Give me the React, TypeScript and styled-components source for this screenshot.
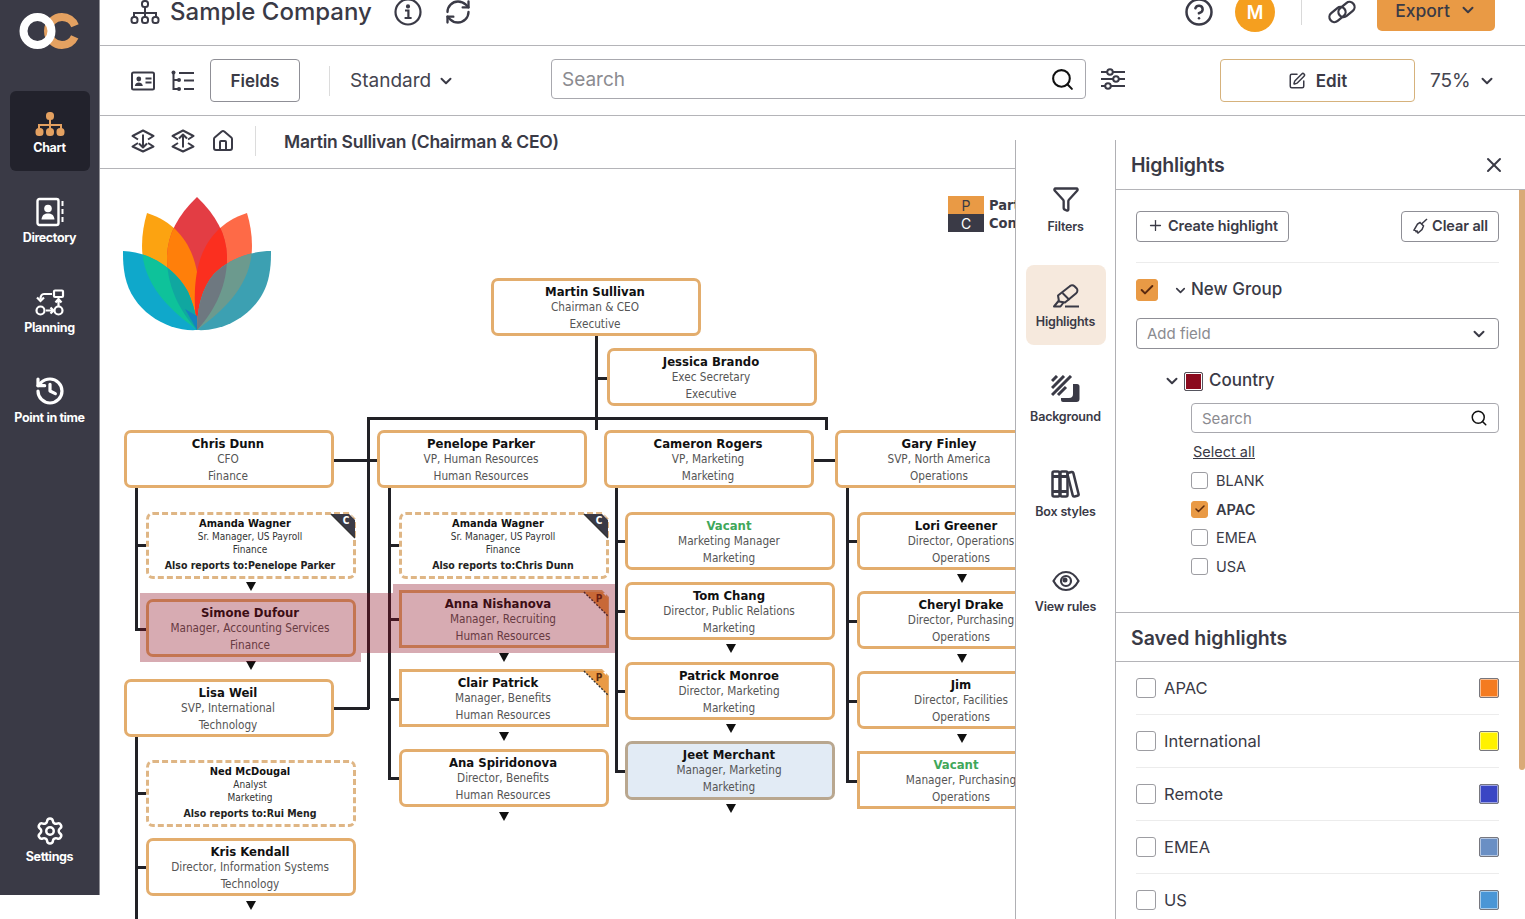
import React from "react";
import styled, { createGlobalStyle } from "styled-components";
import {
  Check,
  ChevronDown,
  CircleHelp,
  Funnel,
  History,
  House,
  Plus,
  RefreshCw,
  Search,
  Settings,
  SquarePen,
  X,
} from "lucide-react";

const INK = "#3a3a46";
const ORANGE = "#e99a45";
const LINE = "#b4b4b8";
const BOX = "#e3ad6d";
const UI_FONT = `Inter, "Noto Sans", sans-serif`;
const CHART_FONT = `"DejaVu Sans Condensed", "DejaVu Sans", Verdana, sans-serif`;

// page position of the chart canvas, the data below is in page pixels
const OX = 100;
const OY = 169;

const GlobalStyle = createGlobalStyle`
  html, body {
    margin: 0;
    padding: 0;
    background: #fff;
  }
  * {
    box-sizing: border-box;
  }
  body {
    font-family: ${UI_FONT};
    color: ${INK};
  }
`;

const Page = styled.div`
  position: relative;
  display: flex;
  width: 1525px;
  height: 919px;
  overflow: hidden;
  background: #fff;
`;

const Sidebar = styled.nav`
  display: flex;
  flex-direction: column;
  align-items: center;
  flex: 0 0 100px;
  height: 895px;
  padding: 11px 0 5px;
  background: #3a3a46;
  border-right: 1px solid #8f8f96;
`;

const SideLogo = styled.svg`
  width: 62px;
  height: 42px;
  margin-bottom: 38px;
`;

const NavItem = styled.div<{ $active?: boolean; $bottom?: boolean }>`
  display: flex;
  flex-direction: column;
  align-items: center;
  justify-content: flex-end;
  gap: 3px;
  width: 80px;
  height: 80px;
  margin-bottom: 10px;
  margin-top: ${(p) => (p.$bottom ? "auto" : "0")};
  padding-bottom: 16px;
  border-radius: 6px;
  background: ${(p) => (p.$active ? "#22222c" : "transparent")};
  color: #fff;
`;

const NavLabel = styled.span`
  font-size: 12.5px;
  line-height: 15px;
  font-weight: 700;
  letter-spacing: -0.38px;
  white-space: nowrap;
`;

const Main = styled.div`
  display: flex;
  flex-direction: column;
  flex: 1;
  min-width: 0;
`;

const Header = styled.header`
  flex: 0 0 46px;
  overflow: hidden;
  border-bottom: 1px solid ${LINE};
`;

const HeaderRow = styled.div`
  display: flex;
  align-items: center;
  height: 46px;
  margin-top: -11px;
  padding: 0 30px;
`;

const CompanyName = styled.h1`
  margin: 0 22px 0 10px;
  font-size: 24px;
  line-height: 24px;
  font-weight: 500;
  white-space: nowrap;
`;

const RefreshIcon = styled(RefreshCw)`
  margin-left: 22px;
`;

const HeaderRight = styled.div`
  display: flex;
  align-items: center;
  margin-left: auto;
`;

const Avatar = styled.div`
  display: flex;
  align-items: center;
  justify-content: center;
  width: 40px;
  height: 40px;
  margin-left: 21px;
  border-radius: 50%;
  background: #f59f1f;
  color: #fff;
  font-size: 18px;
  font-weight: 600;
`;

const HeaderDivider = styled.span`
  width: 1px;
  height: 26px;
  margin: 0 25px 0 26px;
  background: #d9d9d9;
`;

const ExportButton = styled.button`
  display: flex;
  align-items: center;
  justify-content: center;
  gap: 9px;
  width: 118px;
  height: 38px;
  margin-left: 20px;
  padding: 0 0 4px;
  border: 0;
  border-radius: 5px;
  background: ${ORANGE};
  color: ${INK};
  font-family: ${UI_FONT};
  font-size: 17.5px;
  font-weight: 500;
`;

const Toolbar = styled.div`
  display: flex;
  align-items: center;
  flex: 0 0 70px;
  padding-left: 31px;
  border-bottom: 1px solid ${LINE};
`;

const OutlineButton = styled.button`
  display: flex;
  align-items: center;
  justify-content: center;
  height: 43px;
  background: #fff;
  border: 1px solid #8f8f96;
  border-radius: 4px;
  color: ${INK};
  font-family: ${UI_FONT};
  font-size: 17px;
  font-weight: 600;
`;

const FieldsButton = styled(OutlineButton)`
  width: 90px;
  margin-left: 15px;
`;

const EditButton = styled(OutlineButton)`
  gap: 10px;
  width: 195px;
  margin-left: 95px;
  border-color: #d6b27c;
`;

const VSep = styled.span<{ $h: number; $ml: number; $mr: number }>`
  flex: none;
  width: 1px;
  height: ${(p) => p.$h}px;
  margin: 0 ${(p) => p.$mr}px 0 ${(p) => p.$ml}px;
  background: #dcdcdc;
`;

const DropLabel = styled.span`
  font-size: 19px;
  font-weight: 400;
  color: #45454f;
  white-space: nowrap;
`;

const StandardDrop = styled.div`
  display: flex;
  align-items: center;
  gap: 6px;
  width: 201px;
`;

const ZoomDrop = styled.div`
  display: flex;
  align-items: center;
  gap: 7px;
  margin-left: 15px;
`;

const SearchBox = styled.div`
  display: flex;
  align-items: center;
  justify-content: space-between;
  width: 535px;
  height: 40px;
  margin: 0 15px 4px 0;
  padding: 1px 10px 0;
  border: 1px solid #a8a8ae;
  border-radius: 4px;
  font-size: 19px;
  color: #8b8b90;
`;

const SlidersWrap = styled.span`
  display: flex;
  margin-bottom: 4px;
`;

const Crumbs = styled.div`
  display: flex;
  align-items: center;
  gap: 16px;
  flex: 0 0 53px;
  padding: 0 0 2px 31px;
  border-bottom: 1px solid ${LINE};
`;

const CrumbName = styled.span`
  font-size: 17.5px;
  font-weight: 600;
  letter-spacing: -0.25px;
  white-space: nowrap;
`;

const Canvas = styled.div`
  position: relative;
  flex: 1;
  overflow: hidden;
  background: #fff;
`;

const Lotus = styled.svg`
  position: absolute;
  left: ${122 - OX}px;
  top: ${196 - OY}px;
  width: 150px;
  height: 136px;
`;

const LegendRow = styled.div<{ $top: number }>`
  position: absolute;
  left: ${948 - OX}px;
  top: ${(p) => p.$top - OY}px;
  display: flex;
  align-items: center;
  gap: 5px;
  height: 18px;
  font-family: ${CHART_FONT};
  font-stretch: condensed;
  font-size: 14.5px;
  font-weight: 700;
  white-space: nowrap;
`;

const LegendTile = styled.span<{ $dark?: boolean }>`
  display: flex;
  align-items: center;
  justify-content: center;
  width: 36px;
  height: 18px;
  background: ${(p) => (p.$dark ? INK : ORANGE)};
  color: ${(p) => (p.$dark ? "#fff" : INK)};
  font-family: ${UI_FONT};
  font-size: 14px;
  font-weight: 400;
`;

const Wire = styled.div<{ $x: number; $y: number; $w: number; $h: number }>`
  position: absolute;
  left: ${(p) => p.$x - OX}px;
  top: ${(p) => p.$y - OY}px;
  width: ${(p) => p.$w}px;
  height: ${(p) => p.$h}px;
  background: #212126;
`;

const Arrow = styled.div<{ $x: number; $y: number }>`
  position: absolute;
  left: ${(p) => p.$x - 5 - OX}px;
  top: ${(p) => p.$y - OY}px;
  width: 0;
  height: 0;
  border-left: 5.5px solid transparent;
  border-right: 5.5px solid transparent;
  border-top: 9px solid #111;
`;

const HighlightBand = styled.div<{ $x: number; $y: number; $w: number; $h: number }>`
  position: absolute;
  left: ${(p) => p.$x - OX}px;
  top: ${(p) => p.$y - OY}px;
  width: ${(p) => p.$w}px;
  height: ${(p) => p.$h}px;
  background: rgba(139, 10, 30, 0.34);
`;

const NodeBox = styled.div<{
  $x: number;
  $y: number;
  $h: number;
  $dashed?: boolean;
  $square?: boolean;
  $selected?: boolean;
}>`
  position: absolute;
  left: ${(p) => p.$x - OX}px;
  top: ${(p) => p.$y - OY}px;
  width: 210px;
  height: ${(p) => p.$h}px;
  padding: ${(p) => (p.$dashed ? "2px" : "3px")} 2px 0 0;
  border: 3px ${(p) => (p.$dashed ? "dashed" : "solid")}
    ${(p) => (p.$selected ? "#b9a78f" : p.$dashed ? "#dfb685" : BOX)};
  border-radius: ${(p) => (p.$square ? "0" : "7px")};
  background: ${(p) => (p.$selected ? "#e2ebf5" : "#fff")};
  font-family: ${CHART_FONT};
  font-stretch: condensed;
  text-align: center;
  white-space: nowrap;
`;

const NodeName = styled.div<{ $vacant?: boolean; $shift?: number; $small?: boolean }>`
  height: ${(p) => (p.$small ? "13px" : "16px")};
  font-size: ${(p) => (p.$small ? "11px" : "13px")};
  line-height: ${(p) => (p.$small ? "13px" : "16px")};
  font-weight: 700;
  color: ${(p) => (p.$vacant ? "#3fa75a" : "#111")};
  transform: translateX(${(p) => p.$shift ?? 0}px);
`;

const NodeRole = styled.div<{ $small?: boolean }>`
  height: ${(p) => (p.$small ? "13px" : "14px")};
  font-size: ${(p) => (p.$small ? "10px" : "11.7px")};
  line-height: ${(p) => (p.$small ? "13px" : "14px")};
  color: ${(p) => (p.$small ? "#333" : "#555")};
`;

const NodeDept = styled(NodeRole)`
  margin-top: ${(p) => (p.$small ? "0" : "2.5px")};
`;

const NodeAlso = styled.div`
  height: 14px;
  margin-top: 2px;
  font-size: 10.5px;
  line-height: 14px;
  font-weight: 700;
  color: #222;
`;

const NodeTag = styled.svg`
  position: absolute;
  right: -3px;
  top: -3px;
  width: 27px;
  height: 27px;
`;

const ToolPanel = styled.aside`
  position: absolute;
  left: 1015px;
  top: 140px;
  bottom: 0;
  width: 510px;
  display: flex;
  background: #fff;
`;

const Rail = styled.div`
  display: flex;
  flex-direction: column;
  align-items: center;
  gap: 15px;
  flex: 0 0 101px;
  padding-top: 30px;
  border-left: 1px solid #b0b0b4;
  border-right: 1px solid #b0b0b4;
`;

const RailItem = styled.div<{ $active?: boolean }>`
  display: flex;
  flex-direction: column;
  align-items: center;
  justify-content: flex-end;
  gap: 6px;
  width: 80px;
  height: 80px;
  padding-bottom: 16px;
  border-radius: 8px;
  background: ${(p) => (p.$active ? "#f6e9dd" : "transparent")};
`;

const RailLabel = styled.span`
  font-size: 12.5px;
  line-height: 15px;
  font-weight: 600;
  letter-spacing: -0.2px;
  white-space: nowrap;
`;

const Drawer = styled.div`
  position: relative;
  flex: 1;
  min-width: 0;
`;

const DrawerHead = styled.div`
  display: flex;
  align-items: center;
  justify-content: space-between;
  height: 50px;
  padding: 0 19px 0 15px;
  border-bottom: 1px solid ${LINE};
`;

const DrawerTitle = styled.h2`
  margin: 0;
  font-size: 19.5px;
  font-weight: 600;
  letter-spacing: -0.2px;
`;

const Thumb = styled.div`
  position: absolute;
  right: 0;
  top: 50px;
  width: 6px;
  height: 580px;
  border-radius: 0 0 3px 3px;
  background: #d9aa78;
`;

const DrawerBody = styled.div`
  padding: 0 26px 0 20px;
`;

const ActionRow = styled.div`
  display: flex;
  justify-content: space-between;
  padding: 21px 0 20px;
  border-bottom: 1px solid #ececec;
`;

const SmallButton = styled.button`
  display: flex;
  align-items: center;
  gap: 4px;
  height: 31px;
  padding: 0 10px 2px;
  background: #fff;
  border: 1px solid #8f8f96;
  border-radius: 4px;
  color: ${INK};
  font-family: ${UI_FONT};
  font-size: 14.5px;
  font-weight: 600;
  letter-spacing: -0.1px;
`;

const Box = styled.span<{ $size: number; $checked?: boolean }>`
  display: flex;
  align-items: center;
  justify-content: center;
  flex: none;
  width: ${(p) => p.$size}px;
  height: ${(p) => p.$size}px;
  border: 1px solid ${(p) => (p.$checked ? ORANGE : "#9d9da2")};
  border-radius: 3px;
  background: ${(p) => (p.$checked ? ORANGE : "#fff")};
`;

const GroupRow = styled.div`
  display: flex;
  align-items: center;
  height: 22px;
  margin-top: 16px;
`;

const GroupName = styled.span`
  margin: 0 0 2px 3px;
  font-size: 17px;
  font-weight: 500;
`;

const GroupChevron = styled(ChevronDown)`
  margin-left: 15px;
`;

const FieldSelect = styled.div`
  display: flex;
  align-items: center;
  justify-content: space-between;
  height: 31px;
  margin-top: 17px;
  padding: 0 10px;
  border: 1px solid #8f8f96;
  border-radius: 4px;
  font-size: 15px;
  color: #8b8b90;
`;

const CountryRow = styled.div`
  display: flex;
  align-items: center;
  height: 20px;
  margin-top: 22px;
  padding-left: 27px;
`;

const CountrySwatch = styled.span`
  width: 19px;
  height: 19px;
  margin: 0 3px 0 3px;
  border: 1px solid #55555e;
  border-radius: 2px;
  background: #8b0a1e;
  box-shadow: inset 0 0 0 1px #fff;
`;

const ValueSearch = styled.div`
  display: flex;
  align-items: center;
  justify-content: space-between;
  height: 30px;
  margin: 12px 0 0 55px;
  padding: 0 10px;
  border: 1px solid #a8a8ae;
  border-radius: 4px;
  font-size: 15px;
  color: #8b8b90;
`;

const SelectAll = styled.div`
  margin: 10px 0 5px 57px;
  font-size: 14.5px;
  line-height: 18px;
  text-decoration: underline;
`;

const ValueRow = styled.label<{ $checked?: boolean }>`
  display: flex;
  align-items: center;
  gap: 8px;
  height: 28.7px;
  margin-left: 55px;
  font-size: 14.5px;
  font-weight: ${(p) => (p.$checked ? 600 : 400)};
`;

const SavedHead = styled.div`
  display: flex;
  align-items: center;
  height: 50px;
  margin: 31px 6px 0 0;
  padding: 2px 0 0 15px;
  border-top: 1px solid ${LINE};
  border-bottom: 1px solid ${LINE};
`;

const SavedTitle = styled.h3`
  margin: 0;
  font-size: 19.5px;
  font-weight: 600;
`;

const SavedRow = styled.div`
  display: flex;
  align-items: center;
  gap: 8px;
  height: 53px;
  border-bottom: 1px solid #ececec;
  font-size: 16.5px;
  font-weight: 400;
`;

const SavedSwatch = styled.span<{ $color: string }>`
  width: 20px;
  height: 20px;
  margin-left: auto;
  border: 1px solid #77777e;
  border-radius: 2px;
  background: ${(p) => p.$color};
  box-shadow: inset 0 0 0 1px rgba(255, 255, 255, 0.5);
`;

const OrgIcon = ({ color, filled }: { color: string; filled?: boolean }) => (
  <svg width="30" height="26" viewBox="0 0 30 26" fill={filled ? color : "none"} stroke={color} strokeWidth="2">
    <path d="M15 8v6M4 19v-5h22v5M15 14v5" fill="none" />
    <rect x="12" y="2" width="6" height="6" rx="2.5" />
    <rect x="1.5" y="18" width="6" height="6" rx="2.5" />
    <rect x="12" y="18" width="6" height="6" rx="2.5" />
    <rect x="22.5" y="18" width="6" height="6" rx="2.5" />
  </svg>
);

const InfoIcon = () => (
  <svg width="28" height="28" viewBox="0 0 28 28" fill="none" stroke={INK} strokeWidth="2.2">
    <circle cx="14" cy="14" r="12.5" />
    <path d="M11 12.5h3.4V20M10.6 20h7" />
    <circle cx="14" cy="8.4" r="1" fill={INK} />
  </svg>
);

const ChainIcon = () => (
  <svg width="30" height="24" viewBox="0 0 30 24" fill="none" stroke={INK} strokeWidth="2.3">
    <rect x="1.5" y="9.5" width="18" height="10" rx="5" transform="rotate(-40 10.5 14.5)" />
    <rect x="10.5" y="4.5" width="18" height="10" rx="5" transform="rotate(-40 19.5 9.5)" />
  </svg>
);

const CardIcon = () => (
  <svg width="24" height="20" viewBox="0 0 24 20" fill="none" stroke={INK} strokeWidth="2">
    <rect x="1" y="1.5" width="22" height="17" rx="1.5" />
    <circle cx="7.8" cy="8" r="2.4" fill={INK} stroke="none" />
    <path d="M3.8 15c.5-3 2-3.6 4-3.6s3.5.6 4 3.6z" fill={INK} stroke="none" />
    <path d="M14.5 7.5h6M14.5 11.5h6" strokeWidth="1.8" />
  </svg>
);

const TreeListIcon = () => (
  <svg width="24" height="22" viewBox="0 0 24 22" fill="none" stroke={INK} strokeWidth="2">
    <path d="M2.5 2v17h5M2.5 10h5" />
    <circle cx="2.5" cy="2.5" r="2" fill={INK} stroke="none" />
    <circle cx="8" cy="10" r="2" fill={INK} stroke="none" />
    <circle cx="8" cy="19" r="2" fill={INK} stroke="none" />
    <path d="M8 3h15M13 10.5h10M13 19h10" />
  </svg>
);

const SlidersIcon = () => (
  <svg width="24" height="24" viewBox="0 0 24 24" fill="none" stroke={INK} strokeWidth="2">
    <path d="M0 5h24M0 12h24M0 19h24" />
    <circle cx="9" cy="5" r="2.8" fill="#fff" />
    <circle cx="15" cy="12" r="2.8" fill="#fff" />
    <circle cx="7" cy="19" r="2.8" fill="#fff" />
  </svg>
);

const LayersArrowIcon = ({ up }: { up?: boolean }) => (
  <svg width="24" height="24" viewBox="0 0 24 24" fill="none" stroke={INK} strokeWidth="2" strokeLinejoin="round">
    <path d="M7 10.5L1.5 7 12 1.5 22.5 7 17 10.5" />
    <path d="M7 14L1.5 17.5 12 22.5 22.5 17.5 17 14" />
    {up ? <path d="M12 18.5V6M8 9.5L12 5.5l4 4" /> : <path d="M12 5.5V18M8 14.5l4 4 4-4" />}
  </svg>
);

const DirectoryIcon = () => (
  <svg width="28" height="30" viewBox="0 0 28 30" fill="none" stroke="#fff" strokeWidth="2.4">
    <rect x="1.5" y="2" width="21" height="26" rx="2" />
    <circle cx="12" cy="11.5" r="3.8" fill="#fff" stroke="none" />
    <path d="M5.5 22.5c.5-4.5 3-6 6.5-6s6 1.5 6.5 6z" fill="#fff" stroke="none" />
    <path d="M26.5 4v5M26.5 12v5M26.5 20v5" strokeWidth="2" />
  </svg>
);

const PlanningIcon = () => (
  <svg width="30" height="28" viewBox="0 0 30 28" fill="none" stroke="#fff" strokeWidth="2.2">
    <rect x="19" y="1.5" width="9" height="6.5" rx="1" />
    <path d="M17 5H9C6.5 5 5.5 7 5.5 10.5" />
    <path d="M2 8.5l3.5 3.5L9 8.5" />
    <path d="M23.5 17v-6M20.5 13.5l3-3.5 3 3.5" />
    <circle cx="5.5" cy="21.5" r="4" />
    <circle cx="23.5" cy="21.5" r="4" />
    <path d="M11 21.5h7M15.5 18.5l3 3-3 3" />
  </svg>
);

const MarkerIcon = () => (
  <svg width="28" height="25" viewBox="0 0 28 25" fill="none" stroke={INK} strokeWidth="2" strokeLinejoin="round">
    <path d="M17.5 3.5a3.5 3.5 0 0 1 5-.3l2 2a3.5 3.5 0 0 1-.3 5L13 19.5l-6-1-1-6z" />
    <path d="M6.5 18L2 23.5h6.5l3-4" />
    <path d="M13 23.5h14" />
    <path d="M10.5 10l7 7" />
  </svg>
);

const BackgroundIcon = () => (
  <svg width="29" height="28" viewBox="0 0 29 28" fill="none">
    <path d="M1 6l5-5M1 13L13 1M1 20L20 1M7 20l8-8" stroke={INK} strokeWidth="3" />
    <path d="M22 9h4a2.5 2.5 0 0 1 2.5 2.5V24a3 3 0 0 1-3 3H12a2 2 0 0 1-2-2v-2h8a4 4 0 0 0 4-4z" fill={INK} />
  </svg>
);

const BooksIcon = () => (
  <svg width="29" height="28" viewBox="0 0 29 28" fill="none" stroke={INK} strokeWidth="2.5">
    <rect x="1.5" y="1.5" width="7" height="25" rx="1.5" />
    <rect x="9.5" y="1.5" width="7" height="25" rx="1.5" />
    <rect x="19" y="2" width="6" height="24.5" rx="1.5" transform="rotate(-14 22 14)" />
    <path d="M1.5 6.5h15M1.5 21.5h15" strokeWidth="3" />
  </svg>
);

const EyeIcon = () => (
  <svg width="28" height="24" viewBox="0 0 28 24" fill="none" stroke={INK} strokeWidth="2.2">
    <path d="M1.5 12C5 5.5 9 3 14 3s9 2.5 12.5 9C23 18.5 19 21 14 21S5 18.5 1.5 12z" />
    <circle cx="14" cy="12" r="5" />
    <circle cx="13" cy="11" r="2.5" fill={INK} stroke="none" />
  </svg>
);

const BroomIcon = () => (
  <svg width="16" height="16" viewBox="0 0 16 16" fill="none" stroke={INK} strokeWidth="1.5">
    <path d="M15 1L9.5 6" />
    <path d="M8 4.5l3.5 3.5-1.5 3.5L6 15l-1-2-1 .5-.5-1-1.5-.5L5.5 6z" />
  </svg>
);

const OcMark = () => (
  <SideLogo viewBox="0 0 62 42">
    <circle cx="43" cy="20" r="14" fill="none" stroke="#e4a161" strokeWidth="8" strokeDasharray="76 12" strokeDashoffset="-6" />
    <circle cx="18.5" cy="20" r="14" fill="none" stroke="#fff" strokeWidth="8" />
  </SideLogo>
);

const PETAL_L = "M25 17C38 21 48 28 54 34C72 52 82 80 75 134C50 115 20 90 20 50C20 38 22 27 25 17Z";
const PETAL_R = "M125 17C112 21 102 28 96 34C78 52 68 80 75 134C100 115 130 90 130 50C130 38 128 27 125 17Z";
const PETAL_C = "M75 1C55 20 45 40 45 62C45 95 62 120 75 134C88 120 105 95 105 62C105 40 95 20 75 1Z";
const LEAF_L = "M1 55C30 56 55 75 66 96C72 110 75 122 75 134C45 136 10 115 3 80C1 70 1 62 1 55Z";
const LEAF_R = "M149 55C130 55 108 62 92 78C80 92 75 112 75 134C105 136 140 115 147 80C149 70 149 62 149 55Z";

const LotusLogo = () => (
  <Lotus viewBox="0 0 150 136">
    <defs>
      <clipPath id="clip-c"><path d={PETAL_C} /></clipPath>
      <clipPath id="clip-l"><path d={PETAL_L} /></clipPath>
      <clipPath id="clip-r"><path d={PETAL_R} /></clipPath>
    </defs>
    <path d={PETAL_L} fill="#fca311" />
    <path d={PETAL_R} fill="#fe6a47" />
    <path d={PETAL_C} fill="#e33d44" />
    <path d={PETAL_L} fill="#ff7f0a" clipPath="url(#clip-c)" />
    <path d={PETAL_R} fill="#fb2f1f" clipPath="url(#clip-c)" />
    <path d={LEAF_L} fill="#0fa8cb" />
    <path d={LEAF_R} fill="#3ca0b2" />
    <path d={LEAF_L} fill="#0ec29a" clipPath="url(#clip-l)" />
    <path d={LEAF_L} fill="#10a7a0" clipPath="url(#clip-c)" />
    <path d={LEAF_R} fill="#6c9a8e" clipPath="url(#clip-r)" />
    <path d={LEAF_R} fill="#6e7880" clipPath="url(#clip-c)" />
    <path d="M63 113L75 134V120Z" fill="#1482bf" />
  </Lotus>
);

const CornerTag = ({ letter }: { letter: "P" | "C" }) => {
  const dark = letter === "C";
  return (
    <NodeTag viewBox="0 0 27 27">
      <polygon points="20,0 27,0 27,7" fill="#fff" />
      <polygon points="2,2 20,2 26,8 26,26" fill={dark ? INK : ORANGE} />
      <line x1="2" y1="2" x2="26" y2="26" stroke="#333" strokeWidth="1.4" strokeDasharray={dark ? undefined : "2 1.5"} />
      <text x="17" y="12" fontSize="10" fontWeight="700" fontFamily={CHART_FONT} textAnchor="middle" fill={dark ? "#fff" : "#5a2a10"}>
        {letter}
      </text>
    </NodeTag>
  );
};

interface OrgNode {
  x: number;
  y: number;
  name: string;
  role: string;
  dept: string;
  also?: string;
  tag?: "P" | "C";
  shift?: number;
  vacant?: boolean;
  square?: boolean;
  selected?: boolean;
}

const NODES: OrgNode[] = [
  { x: 491, y: 278, name: "Martin Sullivan", role: "Chairman & CEO", dept: "Executive" },
  { x: 607, y: 348, name: "Jessica Brando", role: "Exec Secretary", dept: "Executive" },
  { x: 124, y: 430, name: "Chris  Dunn", role: "CFO", dept: "Finance" },
  { x: 377, y: 430, name: "Penelope Parker", role: "VP, Human Resources", dept: "Human Resources" },
  { x: 604, y: 430, name: "Cameron Rogers", role: "VP, Marketing", dept: "Marketing" },
  { x: 835, y: 430, name: "Gary Finley", role: "SVP, North America", dept: "Operations" },
  { x: 146, y: 512, name: "Amanda Wagner", role: "Sr. Manager, US Payroll", dept: "Finance", also: "Penelope Parker", tag: "C", shift: -5 },
  { x: 146, y: 599, name: "Simone Dufour", role: "Manager, Accounting Services", dept: "Finance" },
  { x: 124, y: 679, name: "Lisa Weil", role: "SVP, International", dept: "Technology" },
  { x: 146, y: 760, name: "Ned McDougal", role: "Analyst", dept: "Marketing", also: "Rui Meng" },
  { x: 146, y: 838, name: "Kris Kendall", role: "Director, Information Systems", dept: "Technology" },
  { x: 399, y: 512, name: "Amanda Wagner", role: "Sr. Manager, US Payroll", dept: "Finance", also: "Chris  Dunn", tag: "C", shift: -5 },
  { x: 399, y: 590, name: "Anna Nishanova", role: "Manager, Recruiting", dept: "Human Resources", tag: "P", shift: -5, square: true },
  { x: 399, y: 669, name: "Clair Patrick", role: "Manager, Benefits", dept: "Human Resources", tag: "P", shift: -5, square: true },
  { x: 399, y: 749, name: "Ana Spiridonova", role: "Director, Benefits", dept: "Human Resources" },
  { x: 625, y: 512, name: "Vacant", role: "Marketing Manager", dept: "Marketing", vacant: true },
  { x: 625, y: 582, name: "Tom Chang", role: "Director, Public Relations", dept: "Marketing" },
  { x: 625, y: 662, name: "Patrick Monroe", role: "Director, Marketing", dept: "Marketing" },
  { x: 625, y: 741, name: "Jeet Merchant", role: "Manager, Marketing", dept: "Marketing", selected: true },
  { x: 857, y: 512, name: "Lori Greener", role: "Director, Operations", dept: "Operations", shift: -5 },
  { x: 857, y: 591, name: "Cheryl Drake", role: "Director, Purchasing", dept: "Operations" },
  { x: 857, y: 671, name: "Jim", role: "Director, Facilities", dept: "Operations" },
  { x: 857, y: 751, name: "Vacant", role: "Manager, Purchasing", dept: "Operations", vacant: true, shift: -5, square: true },
];

// x, y, width, height
const WIRES: [number, number, number, number][] = [
  [595, 336, 3, 83],
  [597, 377, 10, 3],
  [367, 417, 460, 3],
  [367, 417, 3, 292],
  [334, 707, 35, 3],
  [334, 459, 43, 3],
  [595, 417, 3, 13],
  [825, 417, 3, 13],
  [814, 459, 21, 3],
  [135, 488, 3, 142],
  [135, 544, 11, 3],
  [135, 628, 11, 3],
  [135, 737, 3, 182],
  [135, 792, 11, 3],
  [135, 866, 11, 3],
  [388, 488, 3, 291],
  [388, 544, 11, 3],
  [388, 618, 11, 3],
  [388, 698, 11, 3],
  [388, 777, 11, 3],
  [615, 488, 3, 284],
  [615, 540, 10, 3],
  [615, 610, 10, 3],
  [615, 690, 10, 3],
  [615, 770, 10, 3],
  [846, 488, 3, 294],
  [846, 540, 11, 3],
  [846, 620, 11, 3],
  [846, 700, 11, 3],
  [846, 780, 11, 3],
];

const ARROWS: [number, number][] = [
  [251, 582],
  [251, 661],
  [251, 901],
  [504, 653],
  [504, 732],
  [504, 812],
  [731, 644],
  [731, 724],
  [731, 804],
  [962, 574],
  [962, 654],
  [962, 734],
];

const BANDS: [number, number, number, number][] = [
  [140, 593, 221, 69],
  [361, 593, 32, 60],
  [393, 584, 222, 69],
];

const SAVED = [
  { label: "APAC", color: "#f47b20" },
  { label: "International", color: "#fff200" },
  { label: "Remote", color: "#3a46c4" },
  { label: "EMEA", color: "#6a8fc4" },
  { label: "US", color: "#4a96d6" },
];

const VALUES = [
  { label: "BLANK", checked: false },
  { label: "APAC", checked: true },
  { label: "EMEA", checked: false },
  { label: "USA", checked: false },
];

const ChartNode = ({ node }: { node: OrgNode }) => {
  const small = Boolean(node.also);
  return (
    <NodeBox
      $x={node.x}
      $y={node.y}
      $h={small ? 67 : node.selected ? 59 : 58}
      $dashed={small}
      $square={node.square}
      $selected={node.selected}
    >
      <NodeName $vacant={node.vacant} $shift={node.shift} $small={small}>
        {node.name}
      </NodeName>
      <NodeRole $small={small}>{node.role}</NodeRole>
      <NodeDept $small={small}>{node.dept}</NodeDept>
      {node.also && <NodeAlso>Also reports to:{node.also}</NodeAlso>}
      {node.tag && <CornerTag letter={node.tag} />}
    </NodeBox>
  );
};

export default function App() {
  return (
    <Page>
      <GlobalStyle />
      <Sidebar>
        <OcMark />
        <NavItem $active>
          <OrgIcon color="#e4a161" filled />
          <NavLabel>Chart</NavLabel>
        </NavItem>
        <NavItem>
          <DirectoryIcon />
          <NavLabel>Directory</NavLabel>
        </NavItem>
        <NavItem>
          <PlanningIcon />
          <NavLabel>Planning</NavLabel>
        </NavItem>
        <NavItem>
          <History size={32} strokeWidth={2.4} />
          <NavLabel>Point in time</NavLabel>
        </NavItem>
        <NavItem $bottom>
          <Settings size={30} strokeWidth={2} />
          <NavLabel>Settings</NavLabel>
        </NavItem>
      </Sidebar>

      <Main>
        <Header>
          <HeaderRow>
            <OrgIcon color={INK} />
            <CompanyName>Sample Company</CompanyName>
            <InfoIcon />
            <RefreshIcon size={28} strokeWidth={2} />
            <HeaderRight>
              <CircleHelp size={30} strokeWidth={2} />
              <Avatar>M</Avatar>
              <HeaderDivider />
              <ChainIcon />
              <ExportButton>
                Export
                <ChevronDown size={18} strokeWidth={2.6} />
              </ExportButton>
            </HeaderRight>
          </HeaderRow>
        </Header>

        <Toolbar>
          <CardIcon />
          <VSep $h={0} $ml={8} $mr={7} />
          <TreeListIcon />
          <FieldsButton>Fields</FieldsButton>
          <VSep $h={30} $ml={29} $mr={20} />
          <StandardDrop>
            <DropLabel>Standard</DropLabel>
            <ChevronDown size={18} strokeWidth={2.6} />
          </StandardDrop>
          <SearchBox>
            Search
            <Search size={25} strokeWidth={2} color="#111" />
          </SearchBox>
          <SlidersWrap>
            <SlidersIcon />
          </SlidersWrap>
          <EditButton>
            <SquarePen size={18} strokeWidth={2} />
            Edit
          </EditButton>
          <ZoomDrop>
            <DropLabel>75%</DropLabel>
            <ChevronDown size={18} strokeWidth={2.6} />
          </ZoomDrop>
        </Toolbar>

        <Crumbs>
          <LayersArrowIcon />
          <LayersArrowIcon up />
          <House size={24} strokeWidth={2} />
          <VSep $h={30} $ml={4} $mr={12} />
          <CrumbName>Martin Sullivan (Chairman &amp; CEO)</CrumbName>
        </Crumbs>

        <Canvas>
          <LotusLogo />
          <LegendRow $top={196}>
            <LegendTile>P</LegendTile>
            Partner
          </LegendRow>
          <LegendRow $top={214}>
            <LegendTile $dark>C</LegendTile>
            Consultant
          </LegendRow>
          {WIRES.map(([x, y, w, h], i) => (
            <Wire key={i} $x={x} $y={y} $w={w} $h={h} />
          ))}
          {NODES.map((node) => (
            <ChartNode key={`${node.x}-${node.y}`} node={node} />
          ))}
          {ARROWS.map(([x, y], i) => (
            <Arrow key={i} $x={x} $y={y} />
          ))}
          {BANDS.map(([x, y, w, h], i) => (
            <HighlightBand key={i} $x={x} $y={y} $w={w} $h={h} />
          ))}
        </Canvas>
      </Main>

      <ToolPanel>
        <Rail>
          <RailItem>
            <Funnel size={28} strokeWidth={2} />
            <RailLabel>Filters</RailLabel>
          </RailItem>
          <RailItem $active>
            <MarkerIcon />
            <RailLabel>Highlights</RailLabel>
          </RailItem>
          <RailItem>
            <BackgroundIcon />
            <RailLabel>Background</RailLabel>
          </RailItem>
          <RailItem>
            <BooksIcon />
            <RailLabel>Box styles</RailLabel>
          </RailItem>
          <RailItem>
            <EyeIcon />
            <RailLabel>View rules</RailLabel>
          </RailItem>
        </Rail>

        <Drawer>
          <DrawerHead>
            <DrawerTitle>Highlights</DrawerTitle>
            <X size={24} strokeWidth={2} />
          </DrawerHead>
          <Thumb />
          <DrawerBody>
            <ActionRow>
              <SmallButton>
                <Plus size={17} strokeWidth={1.8} />
                Create highlight
              </SmallButton>
              <SmallButton>
                <BroomIcon />
                Clear all
              </SmallButton>
            </ActionRow>
            <GroupRow>
              <Box $size={22} $checked>
                <Check size={16} strokeWidth={3} color="#5a2a10" />
              </Box>
              <GroupChevron size={15} strokeWidth={2.6} />
              <GroupName>New Group</GroupName>
            </GroupRow>
            <FieldSelect>
              Add field
              <ChevronDown size={18} strokeWidth={2.6} color={INK} />
            </FieldSelect>
            <CountryRow>
              <ChevronDown size={18} strokeWidth={2.6} />
              <CountrySwatch />
              <GroupName>Country</GroupName>
            </CountryRow>
            <ValueSearch>
              Search
              <Search size={18} strokeWidth={2} color="#111" />
            </ValueSearch>
            <SelectAll>Select all</SelectAll>
            {VALUES.map((v) => (
              <ValueRow key={v.label} $checked={v.checked}>
                <Box $size={17} $checked={v.checked}>
                  {v.checked && <Check size={12} strokeWidth={3} color="#5a2a10" />}
                </Box>
                {v.label}
              </ValueRow>
            ))}
          </DrawerBody>
          <SavedHead>
            <SavedTitle>Saved highlights</SavedTitle>
          </SavedHead>
          <DrawerBody>
            {SAVED.map((s) => (
              <SavedRow key={s.label}>
                <Box $size={20} />
                {s.label}
                <SavedSwatch $color={s.color} />
              </SavedRow>
            ))}
          </DrawerBody>
        </Drawer>
      </ToolPanel>
    </Page>
  );
}
